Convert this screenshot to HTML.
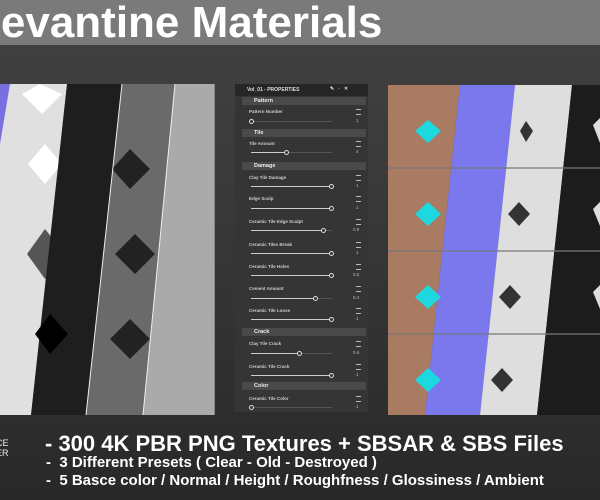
<!DOCTYPE html><html><head><style>
body{margin:0;width:600px;height:500px;overflow:hidden;background:#2e2e2e;font-family:"Liberation Sans",sans-serif;position:relative}
.a{position:absolute}
.p{font-size:5px;color:#ddd;font-weight:bold}
.sec{position:absolute;left:242px;width:124px;height:8px;background:#4a4a4a;color:#eee;font-size:5.5px;font-weight:bold;line-height:8px;padding-left:12px;box-sizing:border-box}
.lb{position:absolute;left:249px;font-size:4.5px;font-weight:bold;color:#ccc}
.sl{position:absolute;left:251px;width:81px;height:1px;background:#555}
.fl{position:absolute;left:0;top:0;height:1px;background:#ccc}
.kn{position:absolute;top:-2px;width:3px;height:3px;border:1px solid #ddd;border-radius:50%;background:#333}
.v{position:absolute;left:356px;font-size:4.5px;color:#bbb}
.ic{position:absolute;left:356px;width:5px;height:4px;border-top:1px solid #bbb;border-bottom:1px solid #bbb}
</style></head><body>
<div class="a" style="left:0;top:0;width:600px;height:45px;background:#7a7a7a"></div>
<div class="a" style="left:0;top:45px;width:600px;height:455px;background:linear-gradient(#404040,#333 60%,#282828)"></div>
<div class="a" style="left:-26px;top:-2px;font-size:44px;font-weight:bold;color:#fff;white-space:nowrap">Levantine Materials</div>

<svg class="a" style="left:0;top:84px" width="215" height="331">
<rect width="215" height="331" fill="#888"/>
<polygon points="0,0 12,0 0,80" fill="#7a6fe0"/>
<polygon points="10,0 67,0 31,331 0,331 0,60" fill="#e0e0e0"/>
<polygon points="40,0 62,10 42,30 22,10" fill="#fff"/>
<polygon points="45,60 62,80 45,100 28,80" fill="#fff"/>
<polygon points="45,145 65,170 45,195 27,170" fill="#555"/>
<polygon points="67,0 122,0 86,331 31,331" fill="#1e1e1e"/>
<polygon points="50,230 68,250 50,270 35,250" fill="#000"/>
<polygon points="122,0 175,0 143,331 86,331" fill="#6a6a6a"/>
<polygon points="130,65 150,85 130,105 112,85" fill="#222"/>
<polygon points="135,150 155,170 135,190 115,170" fill="#222"/>
<polygon points="130,235 150,255 130,275 110,255" fill="#222"/>
<polygon points="175,0 214,0 214,331 143,331" fill="#aaa"/>
<line x1="122" y1="0" x2="86" y2="331" stroke="#eee" stroke-width="1"/>
<line x1="175" y1="0" x2="143" y2="331" stroke="#eee" stroke-width="1"/>
</svg>

<div class="a" style="left:235px;top:84px;width:133px;height:328px;background:#353535"></div>
<div class="a" style="left:235px;top:84px;width:133px;height:12px;background:#262626"></div>
<div class="a p" style="left:247px;top:87px">Vol_01 - PROPERTIES</div>
<div class="a p" style="left:330px;top:86px;letter-spacing:4px">✎▫✕</div>
<div class="sec" style="top:97px">Pattern</div>
<div class="sec" style="top:129px">Tile</div>
<div class="sec" style="top:162px">Damage</div>
<div class="sec" style="top:328px">Crack</div>
<div class="sec" style="top:382px">Color</div>

<div class="lb" style="top:109px">Pattern Number</div><div class="sl" style="top:121px"><div class="kn" style="left:-2px"></div></div><div class="v" style="top:118px">1</div><div class="ic" style="top:109px"></div>
<div class="lb" style="top:141px">Tile Amount</div><div class="sl" style="top:152px"><div class="fl" style="width:35px"></div><div class="kn" style="left:33px"></div></div><div class="v" style="top:149px">4</div><div class="ic" style="top:141px"></div>
<div class="lb" style="top:175px">Clay Tile Damage</div><div class="sl" style="top:186px"><div class="fl" style="width:80px"></div><div class="kn" style="left:78px"></div></div><div class="v" style="top:183px">1</div><div class="ic" style="top:175px"></div>
<div class="lb" style="top:196px">Edge Sculp</div><div class="sl" style="top:208px"><div class="fl" style="width:80px"></div><div class="kn" style="left:78px"></div></div><div class="v" style="top:205px">1</div><div class="ic" style="top:196px"></div>
<div class="lb" style="top:219px">Ceramic Tile Edge Sculpt</div><div class="sl" style="top:230px"><div class="fl" style="width:72px"></div><div class="kn" style="left:70px"></div></div><div class="v" style="top:227px;left:353px">0.9</div><div class="ic" style="top:219px"></div>
<div class="lb" style="top:242px">Ceramic Tiles Break</div><div class="sl" style="top:253px"><div class="fl" style="width:80px"></div><div class="kn" style="left:78px"></div></div><div class="v" style="top:250px">1</div><div class="ic" style="top:242px"></div>
<div class="lb" style="top:264px">Ceramic Tile Holes</div><div class="sl" style="top:275px"><div class="fl" style="width:80px"></div><div class="kn" style="left:78px"></div></div><div class="v" style="top:272px;left:353px">0.5</div><div class="ic" style="top:264px"></div>
<div class="lb" style="top:286px">Cement Amount</div><div class="sl" style="top:298px"><div class="fl" style="width:64px"></div><div class="kn" style="left:62px"></div></div><div class="v" style="top:295px;left:353px">0.4</div><div class="ic" style="top:286px"></div>
<div class="lb" style="top:308px">Ceramic Tile Loose</div><div class="sl" style="top:319px"><div class="fl" style="width:80px"></div><div class="kn" style="left:78px"></div></div><div class="v" style="top:316px">1</div><div class="ic" style="top:308px"></div>
<div class="lb" style="top:341px">Clay Tile Crack</div><div class="sl" style="top:353px"><div class="fl" style="width:48px"></div><div class="kn" style="left:46px"></div></div><div class="v" style="top:350px;left:353px">0.6</div><div class="ic" style="top:341px"></div>
<div class="lb" style="top:364px">Ceramic Tile Crack</div><div class="sl" style="top:375px"><div class="fl" style="width:80px"></div><div class="kn" style="left:78px"></div></div><div class="v" style="top:372px">1</div><div class="ic" style="top:364px"></div>
<div class="lb" style="top:396px">Ceramic Tile Color</div><div class="sl" style="top:407px"><div class="kn" style="left:-2px"></div></div><div class="v" style="top:404px">1</div><div class="ic" style="top:396px"></div>

<svg class="a" style="left:388px;top:85px" width="212" height="330">
<polygon points="0,0 72,0 37,330 0,330" fill="#a97b62"/>
<polygon points="72,0 127,0 92,330 37,330" fill="#7b78ee"/>
<polygon points="127,0 184,0 149,330 92,330" fill="#dedede"/>
<polygon points="184,0 212,0 212,330 149,330" fill="#1c1c1c"/>
<g stroke="#777" stroke-width="1.2"><line x1="0" y1="83" x2="212" y2="83"/><line x1="0" y1="166" x2="212" y2="166"/><line x1="0" y1="249" x2="212" y2="249"/></g>
<g fill="#1ed8e0"><polygon points="40,35 53,46 40,58 27,46"/><polygon points="40,117 53,129 40,141 27,129"/><polygon points="40,200 53,212 40,224 27,212"/><polygon points="40,283 53,295 40,307 27,295"/></g>
<g fill="#333"><polygon points="138,36 145,46 138,57 132,46"/><polygon points="131,117 142,129 131,141 120,129"/><polygon points="122,200 133,212 122,224 111,212"/><polygon points="114,283 125,295 114,307 103,295"/></g>
<g fill="#ddd"><polygon points="205,40 212,33 212,58"/><polygon points="205,124 212,117 212,141"/><polygon points="205,207 212,200 212,224"/></g>
</svg>

<div class="a" style="left:-4px;top:438px;font-size:9px;color:#eee;line-height:10px">CE<br>ER</div>
<div class="a" style="left:45px;top:431px;font-size:22px;font-weight:bold;color:#fff;white-space:nowrap">- 300 4K PBR PNG Textures + SBSAR &amp; SBS Files</div>
<div class="a" style="left:46px;top:454px;font-size:15px;font-weight:bold;color:#fff;white-space:nowrap">-&nbsp; 3 Different Presets ( Clear - Old - Destroyed )</div>
<div class="a" style="left:46px;top:472px;font-size:15px;font-weight:bold;color:#fff;white-space:nowrap">-&nbsp; 5 Basce color / Normal / Height / Roughfness / Glossiness / Ambient</div>
</body></html>
